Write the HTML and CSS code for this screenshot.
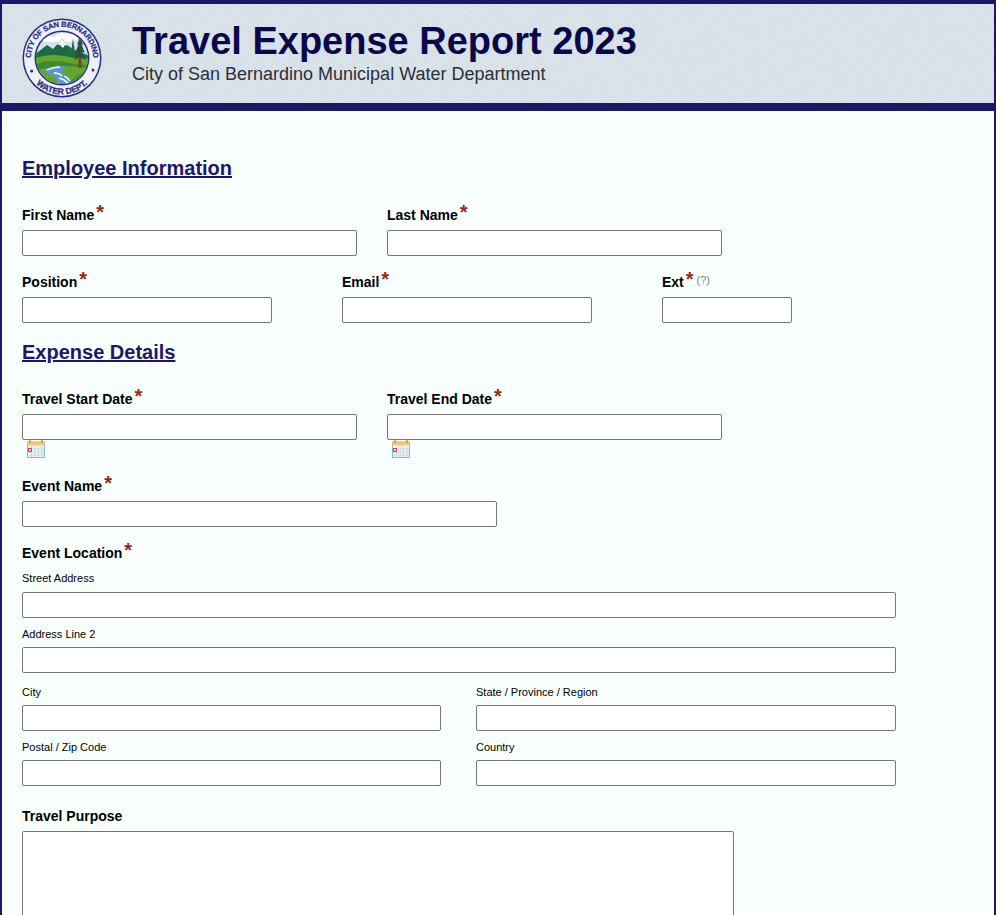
FILE: index.html
```html
<!DOCTYPE html>
<html lang="en">
<head>
<meta charset="utf-8">
<title>Travel Expense Report 2023</title>
<link rel="stylesheet" href="styles.css">
</head>
<body>
<div class="page">
  <header class="banner">
    <svg class="logo" viewBox="0 0 80 80" width="80" height="80">
      <defs>
        <path id="arcTop" d="M9.500 45.400 A31 31 0 1 1 70.500 45.400"/>
        <path id="arcBottom" d="M10.100 60.900 A36.500 36.500 0 0 0 69.900 60.900"/>
        <clipPath id="inner"><circle cx="40" cy="40" r="26"/></clipPath>
      </defs>
      <circle cx="40" cy="40" r="39.500" fill="#2a2d80"/>
      <circle cx="40" cy="40" r="38" fill="#eef0f8"/>
      <circle cx="40" cy="40" r="27.500" fill="#2a2d80"/>
      <g clip-path="url(#inner)">
        <rect x="12" y="12" width="56" height="56" fill="#cfe6ef"/>
        <path d="M20 22 q5-6 12-3 q6-6 14-3 q8-1 10 5 l-6 3 h-26z" fill="#fff"/>
        <path d="M12 37 L25 27 L31 31 L40 21 L50 31 L68 38 V52 H12z" fill="#1d6a47"/>
        <path d="M35 26.500 L40 21 L47 28 L43 27 L41 30 L38 27z" fill="#f4f7f4"/>
        <path d="M12 40 Q28 35 42 38 T68 40 V68 H12z" fill="#63a52c"/>
        <path d="M14 46 Q28 41 42 44 T68 47 V50 Q40 46 14 52z" fill="#3f8a2a"/>
        <path d="M20 52 Q34 46 47 49 Q38 51 39 54 Q48 58 54 68 H34 Q38 60 28 56 Q24 54 20 52z" fill="#5f97c9"/>
        <path d="M25 52 q6-3 13-3 M32 55 q5 0 8 3 M37 60 q5 1 9 5 M42 58 q3 1 6 5" stroke="#fff" stroke-width="1.300" fill="none"/>
        <path d="M14 58 Q24 58 32 68 H14z" fill="#3f7f2a"/>
        <path d="M46 68 Q50 56 68 54 V68z" fill="#4d8f2b"/>
        <path d="M57.300 17 L58.700 17 L60 50 L56 50z" fill="#6f4c2e"/>
        <path d="M58 19 L61 27 L59.500 26.500 L63 35 L60 34 L64 42 L58 39 L52 42 L56 34 L53 35 L56.500 26.500 L55 27z" fill="#27533a"/>
        <path d="M51 20 L53 34 L49 34z" fill="#3c5f45"/>
      </g>
      <text class="logo-text"><textPath href="#arcTop" startOffset="50%" text-anchor="middle">CITY OF SAN BERNARDINO</textPath></text>
      <text class="logo-text logo-text-low"><textPath href="#arcBottom" startOffset="50%" text-anchor="middle">WATER DEPT.</textPath></text>
      <circle cx="9.600" cy="53" r="1.500" fill="#2a2d80"/>
      <circle cx="71" cy="52" r="1.500" fill="#2a2d80"/>
    </svg>
    <div class="titles">
      <h1 class="title">Travel Expense Report 2023</h1>
      <p class="subtitle">City of San Bernardino Municipal Water Department</p>
    </div>
  </header>

  <main class="form">
    <h2 class="section section-first">Employee Information</h2>
    <div class="row row-name">
      <div class="field w335"><label class="label">First Name<span class="req">*</span></label><input class="input"></div>
      <div class="field w335"><label class="label">Last Name<span class="req">*</span></label><input class="input"></div>
    </div>
    <div class="row row-position">
      <div class="field w250"><label class="label">Position<span class="req">*</span></label><input class="input"></div>
      <div class="field w250"><label class="label">Email<span class="req">*</span></label><input class="input"></div>
      <div class="field w130"><label class="label">Ext<span class="req">*</span><span class="hint">(?)</span></label><input class="input"></div>
    </div>

    <h2 class="section section-second">Expense Details</h2>
    <div class="row row-name">
      <div class="field w335"><label class="label">Travel Start Date<span class="req">*</span></label><input class="input">
        <svg class="cal" viewBox="0 0 18 18" width="18" height="18"><use href="#calendar"/></svg></div>
      <div class="field w335"><label class="label">Travel End Date<span class="req">*</span></label><input class="input">
        <svg class="cal" viewBox="0 0 18 18" width="18" height="18"><use href="#calendar"/></svg></div>
    </div>
    <div class="field w475 event-name"><label class="label">Event Name<span class="req">*</span></label><input class="input"></div>
    <div class="location">
      <label class="label">Event Location<span class="req">*</span></label>
      <div class="sub-field sub-street"><span class="sub-label">Street Address</span><input class="input"></div>
      <div class="sub-field"><span class="sub-label">Address Line 2</span><input class="input"></div>
      <div class="sub-grid">
        <div class="sub-field"><span class="sub-label">City</span><input class="input"></div>
        <div class="sub-field"><span class="sub-label">State / Province / Region</span><input class="input"></div>
        <div class="sub-field"><span class="sub-label">Postal / Zip Code</span><input class="input"></div>
        <div class="sub-field"><span class="sub-label">Country</span><input class="input"></div>
      </div>
    </div>
    <div class="purpose">
      <label class="label">Travel Purpose</label>
      <textarea class="textarea"></textarea>
    </div>
  </main>
</div>
<svg class="defs" width="0" height="0">
  <symbol id="calendar" viewBox="0 0 18 18">
    <rect x="0.500" y="2.500" width="17" height="15" fill="#f0f5f8" stroke="#8fb8d0"/>
    <rect x="0.500" y="1" width="17" height="4.500" fill="#f3c873"/>
    <path d="M3 0v3M15 0v3" stroke="#c9963c" stroke-width="1.500"/>
    <path d="M1 9h16M1 12h16M1 15h16M4.500 6v11M8 6v11M11.500 6v11M15 6v11" stroke="#bcd3e0" stroke-width="0.800"/>
    <rect x="1.500" y="8.500" width="3" height="3" fill="#f6d0d0" stroke="#cf4a4a"/>
  </symbol>
</svg>
</body>
</html>
```

FILE: styles.css
```css
* { box-sizing: border-box; }
html, body { margin: 0; padding: 0; height: 100%; overflow: hidden; }
body { font-family: "Liberation Sans", Arial, sans-serif; color: #000; background: #f8fffd; }
.page {
  height: 915px;
  overflow: hidden;
  border: solid #1d1769;
  border-width: 4px 2px 0;
  background: #f8fffd;
}
.banner {
  height: 107px;
  display: flex;
  align-items: flex-start;
  border-bottom: 8px solid #1d1769;
  background-color: #dde5eb;
  background-image: url("data:image/svg+xml,%3Csvg xmlns='http://www.w3.org/2000/svg' width='300' height='300'%3E%3Cfilter id='n'%3E%3CfeTurbulence type='fractalNoise' baseFrequency='0.8' numOctaves='2'/%3E%3CfeColorMatrix values='0 0 0 0 0.55 0 0 0 0 0.66 0 0 0 0 0.74 0 0 0 1.6 -0.62'/%3E%3C/filter%3E%3Crect width='300' height='300' filter='url(%23n)'/%3E%3C/svg%3E");
  padding: 14px 0 0 20px;
}
.logo { display: block; flex: none; }
.logo-text { font: 700 7.600px "Liberation Sans", Arial, sans-serif; letter-spacing: -0.2px; fill: #2a2d80; stroke: #2a2d80; stroke-width: 0.25px; }
.logo-text-low { font-size: 8.600px; letter-spacing: 0; }
.titles { margin-left: 30px; padding-top: 1px; }
.title { margin: 0; font-size: 38px; line-height: 45px; font-weight: 700; color: #0a0848; }
.subtitle { margin: 0; font-size: 18px; line-height: 21px; color: #2b2f36; }
.form { padding: 0 0 0 20px; }
.section { margin: 0; font-size: 20px; line-height: 24px; font-weight: 700; color: #1d1769; text-decoration: underline; }
.section-first { padding-top: 45px; }
.section-second { padding-top: 17px; }
.row { display: flex; }
.row-name { gap: 30px; padding-top: 21px; }
.row-position { gap: 70px; padding-top: 12px; }
.field { display: flex; flex-direction: column; }
.w335 { width: 335px; }
.w250 { width: 250px; }
.w130 { width: 130px; }
.w475 { width: 475px; }
.label { display: block; height: 29px; padding-top: 4px; font-size: 14px; line-height: 16px; font-weight: 700; color: #000; white-space: nowrap; }
.req { position: relative; top: -1px; margin-left: 2px; font-size: 20px; line-height: 16px; font-weight: 700; color: #9a2518; }
.hint { position: relative; top: -3px; margin-left: 3px; font-size: 11px; font-weight: 400; color: #858585; }
.input {
  display: block;
  width: 100%;
  height: 26px;
  margin: 0;
  padding: 0 6px;
  background: #fff;
  border: 1px solid #767676;
  border-radius: 2px;
}
.cal { display: block; margin: 0 0 0 5px; flex: none; }
.event-name { padding-top: 14px; }
.location { padding-top: 12px; width: 874px; }
.sub-label { display: block; height: 21px; padding-top: 1px; font-size: 11px; line-height: 14px; color: #000; }
.sub-street { margin-top: 2px; }
.sub-street .sub-label { height: 22px; }
.sub-field { padding-bottom: 8px; }
.sub-grid { display: grid; grid-template-columns: 419px 420px; column-gap: 35px; margin-top: 3px; }
.purpose { padding-top: 10px; }
.purpose .label { height: 27px; }
.textarea { display: block; width: 712px; height: 200px; background: #fff; border: 1px solid #767676; border-radius: 2px; }
.defs { position: absolute; }
```
